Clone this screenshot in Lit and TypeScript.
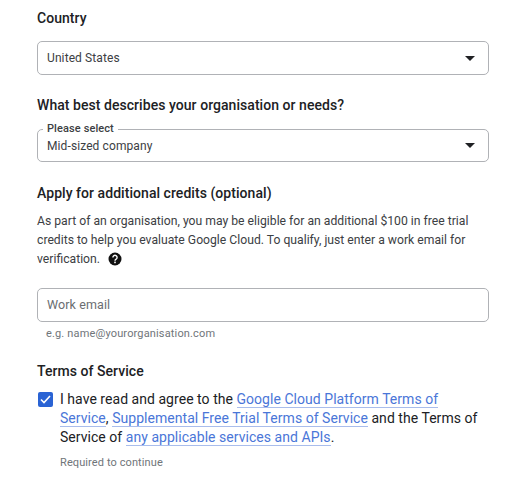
import { LitElement, html, css } from "lit";
import { customElement } from "lit/decorators.js";

const arrow = html`<svg class="arrow" width="10" height="5" viewBox="0 0 10 5"><path d="M0 0h10L5 5z" fill="#202124"/></svg>`;

@customElement("app-root")
export class AppRoot extends LitElement {
  static styles = css`
    :host {
      display: block;
      width: 512px;
      height: 477px;
      overflow: hidden;
      background: #fff;
      font-family: Roboto, "Liberation Sans", sans-serif;
      color: #202124;
      box-sizing: border-box;
    }
    .page {
      display: flex;
      flex-direction: column;
      width: 452px;
      margin-left: 37px;
      padding-top: 9px;
    }
    h2 {
      margin: 0;
      font-size: 14px;
      font-weight: 500;
      line-height: 18px;
      letter-spacing: 0.05px;
      color: #202124;
    }
    .field {
      position: relative;
      box-sizing: border-box;
      display: flex;
      align-items: center;
      justify-content: space-between;
      height: 34px;
      border: 1px solid #b0b2b6;
      border-radius: 5px;
      padding: 0 13px 0 9px;
      font-size: 12px;
      line-height: 16px;
      letter-spacing: 0.1px;
      color: #3c4043;
    }
    .country { margin-top: 14px; }
    .q { margin-top: 21px; }
    .org {
      margin-top: 15px;
      height: 33px;
    }
    .legend {
      position: absolute;
      left: 5px;
      top: -8px;
      background: #fff;
      padding: 0 4px;
      font-size: 11px;
      line-height: 13px;
      font-weight: 500;
      color: #3c4043;
    }
    .credits { margin-top: 22px; }
    .desc {
      margin: 10px 0 0;
      font-size: 12.2px;
      line-height: 19px;
      color: #3c4043;
      display: block;
    }
    .help {
      display: inline-block;
      vertical-align: -3px;
      margin-left: 5px;
    }
    .email {
      margin-top: 19px;
      font-size: 12.5px;
      color: #6a6d71;
    }
    .hint {
      margin: 5px 0 0 9px;
      font-size: 11px;
      line-height: 14px;
      letter-spacing: 0.15px;
      color: #70757a;
    }
    .terms { margin-top: 21px; }
    .agree {
      display: flex;
      margin-top: 10px;
      gap: 7px;
    }
    .box {
      flex: none;
      width: 15px;
      height: 15px;
      margin: 2px 0 0 1px;
      border-radius: 2px;
      background: #2a63d4;
      display: flex;
      align-items: center;
      justify-content: center;
    }
    .text {
      font-size: 14px;
      line-height: 19px;
      color: #202124;
      letter-spacing: 0.04px;
    }
    a {
      color: #4a76d8;
      text-decoration: none;
      border-bottom: 1px solid #a9bdec;
    }
    .req {
      margin-top: 9px;
      font-size: 11px;
      line-height: 14px;
      letter-spacing: 0.1px;
      color: #70757a;
    }
  `;

  render() {
    return html`<div class="page">
      <h2>Country</h2>
      <div class="field country"><span>United States</span>${arrow}</div>
      <h2 class="q">What best describes your organisation or needs?</h2>
      <div class="field org">
        <span class="legend">Please select</span>
        <span>Mid-sized company</span>${arrow}
      </div>
      <h2 class="credits">Apply for additional credits (optional)</h2>
      <p class="desc">As part of an organisation, you may be eligible for an additional $100 in free trial credits to help you evaluate Google Cloud. To qualify, just enter a work email for verification. <svg class="help" width="14" height="14" viewBox="0 0 14 14"><circle cx="7" cy="7" r="6.5" fill="#111"/><path d="M4.9 5.4a2.1 2.1 0 1 1 3.2 1.8c-.7.4-1.1.8-1.1 1.5" fill="none" stroke="#fff" stroke-width="1.4"/><rect x="6.2" y="9.6" width="1.6" height="1.6" fill="#fff"/></svg></p>
      <div class="field email"><span>Work email</span></div>
      <div class="hint">e.g. name@yourorganisation.com</div>
      <h2 class="terms">Terms of Service</h2>
      <div class="agree">
        <div class="box"><svg width="11" height="9" viewBox="0 0 11 9"><path d="M1 4.5l3 3 6-6.5" fill="none" stroke="#fff" stroke-width="1.6"/></svg></div>
        <div>
          <div class="text">I have read and agree to the <a>Google Cloud Platform Terms of Service</a>, <a>Supplemental Free Trial Terms of Service</a> and the Terms of Service of <a>any applicable services and APIs</a>.</div>
          <div class="req">Required to continue</div>
        </div>
      </div>
    </div>`;
  }
}
